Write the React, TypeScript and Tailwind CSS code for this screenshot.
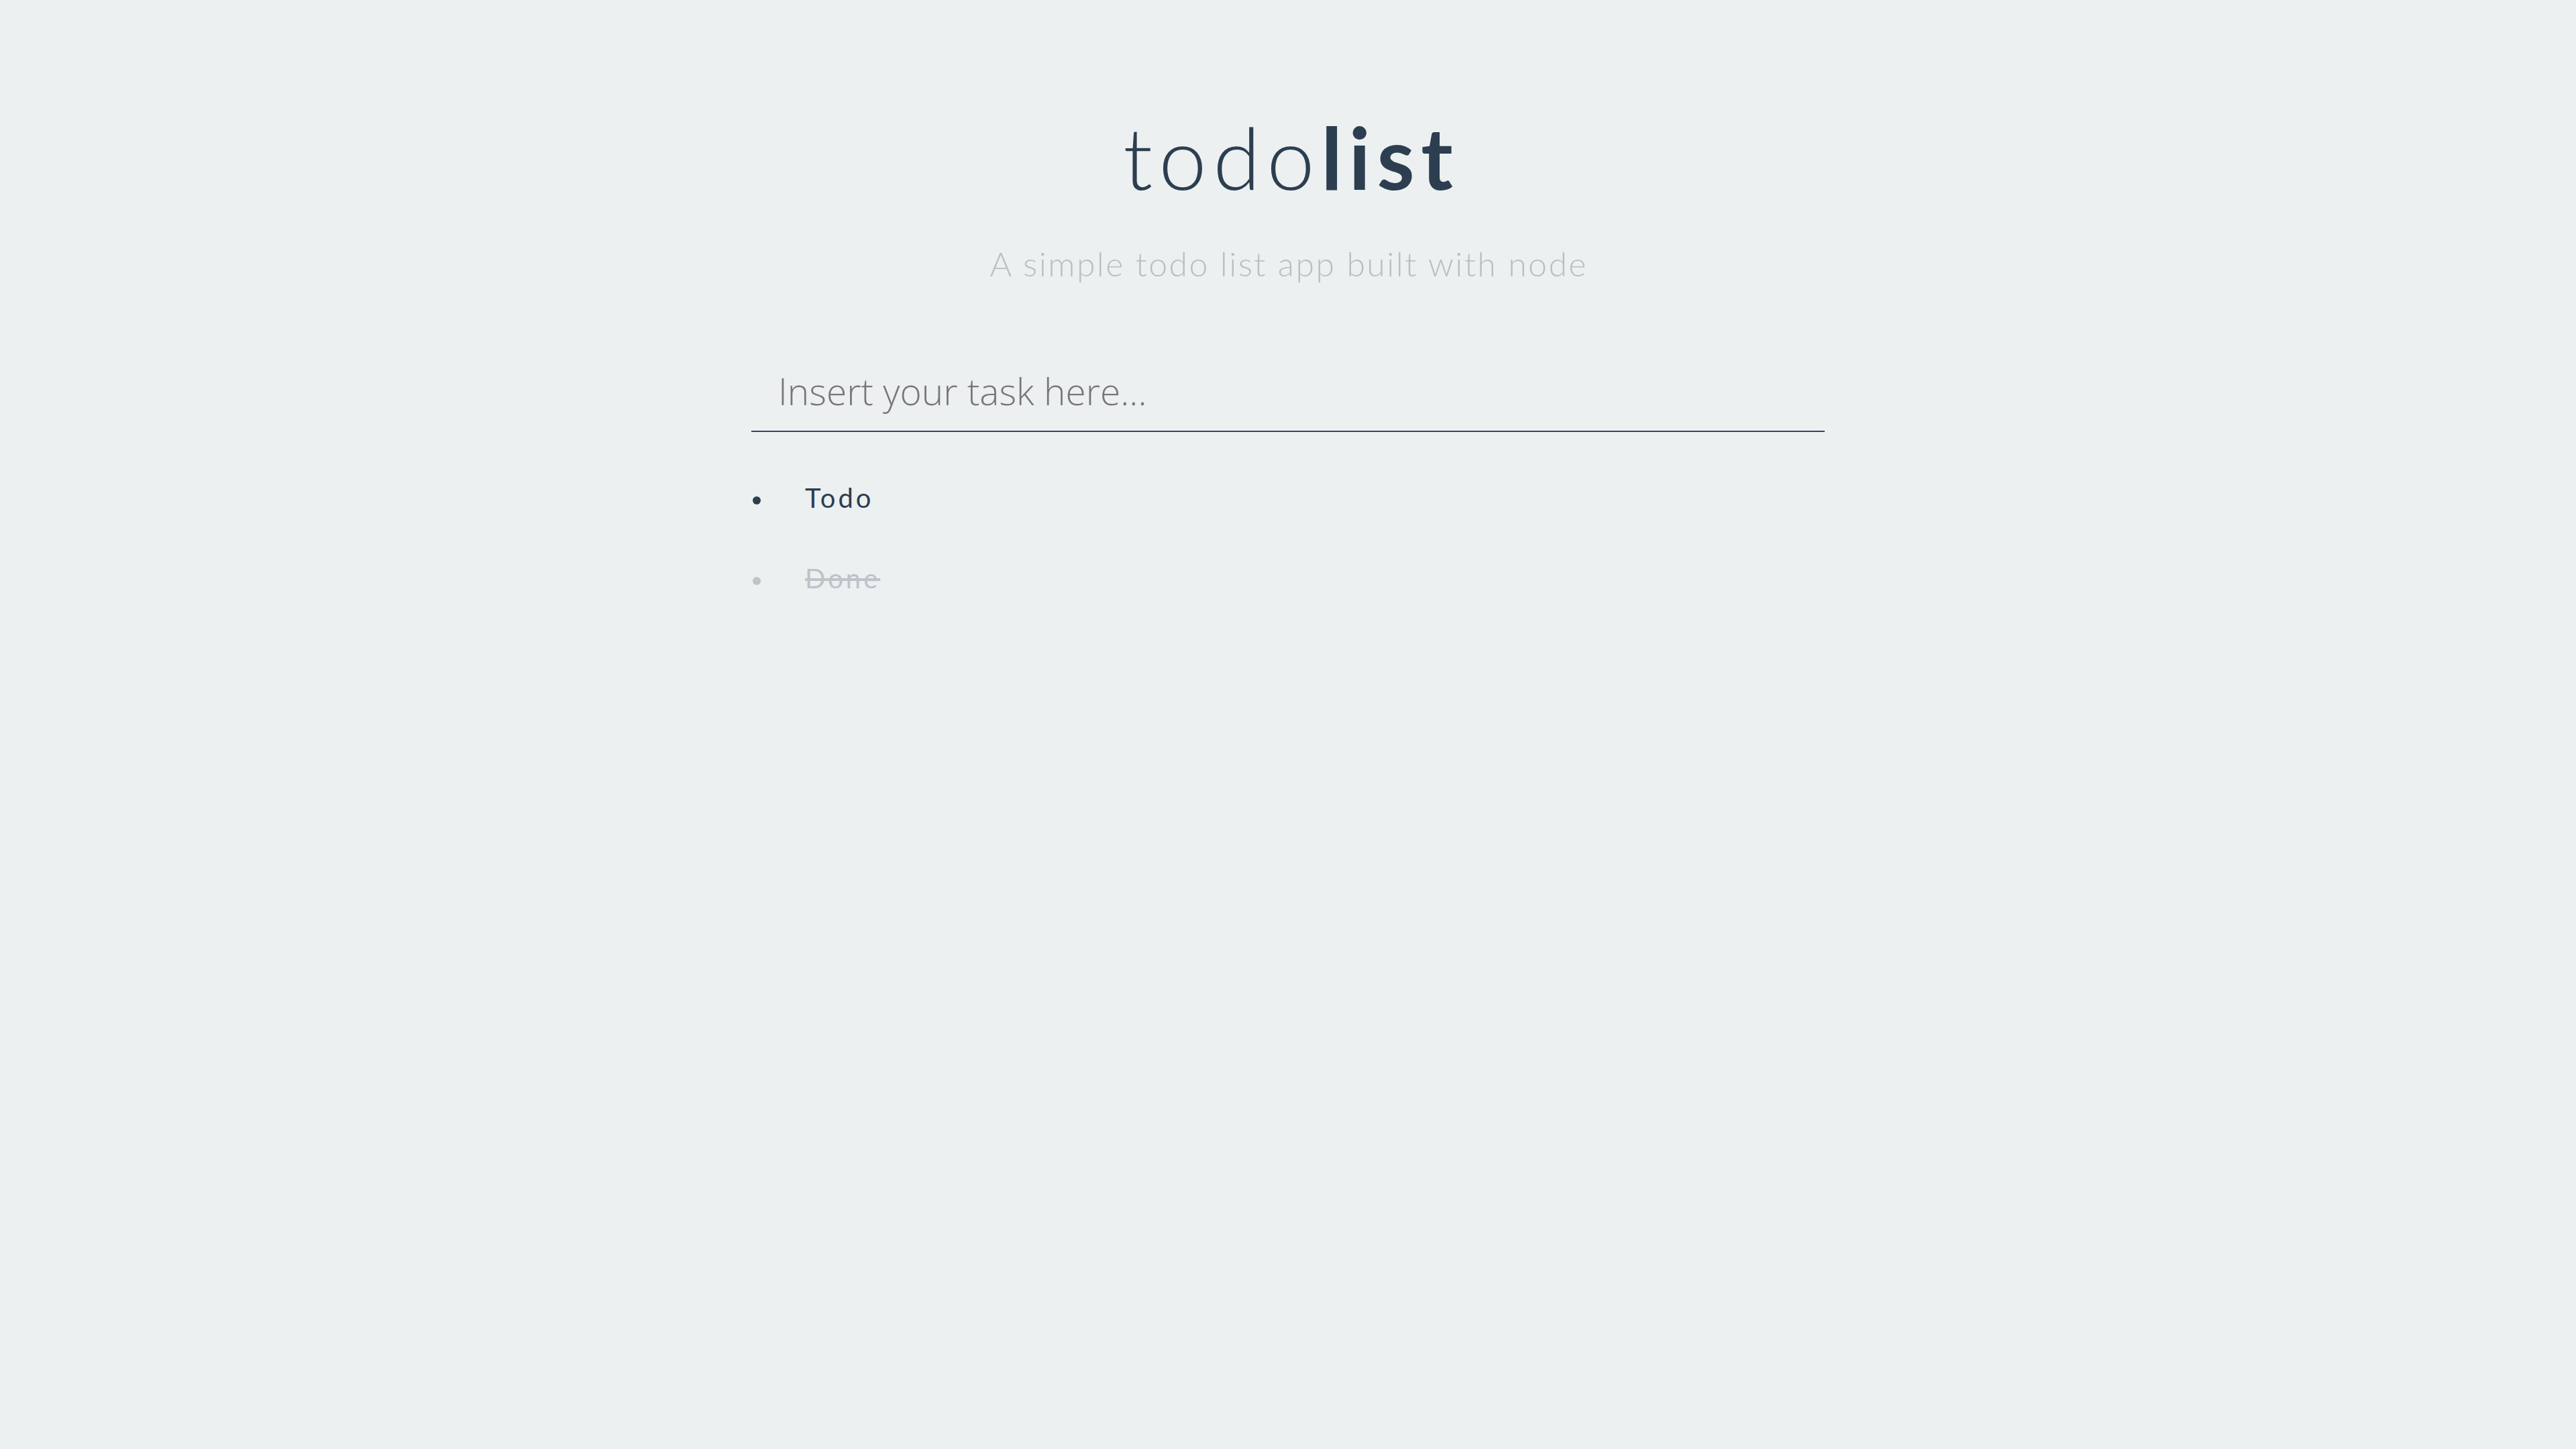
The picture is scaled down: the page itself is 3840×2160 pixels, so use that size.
import React from "react";

export default function App() {
  return (
    <div className="min-h-screen bg-[#ecf0f1] font-['Lato',sans-serif]">
      <div className="w-[1600px] mx-auto pt-[170px]">
        <h1 className="text-center text-[128px] leading-[128px] tracking-[9.5px] pl-[9.5px] text-[#2c3e50] font-['Lato',sans-serif]">
          <span className="font-light">todo</span>
          <span className="font-bold">list</span>
        </h1>
        <p className="mt-[65px] text-center text-[50px] leading-[60px] tracking-[2.4px] pl-[2.4px] font-light text-[#b8bfc4]">
          A simple todo list app built with node
        </p>
        <input
          type="text"
          placeholder="Insert your task here..."
          className="mt-[119px] block w-full h-[102px] pt-0 pb-[20px] pl-[40px] bg-transparent border-0 border-b-2 border-[#34495e] outline-none text-[55px] font-['Open_Sans',sans-serif] font-light text-[#2c3e50] placeholder:text-[#777777]"
        />
        <ul className="mt-[38px]">
          <li className="flex items-center leading-[120px] text-[40px] tracking-[4px] text-[#2c3e50]">
            <span className="ml-[2px] mt-[7px] w-[12px] h-[12px] rounded-full bg-[#2c3e50] shrink-0" />
            <span className="ml-[66px]">Todo</span>
          </li>
          <li className="flex items-center leading-[120px] text-[40px] tracking-[4px] text-[#bdc3c7]">
            <span className="ml-[2px] mt-[7px] w-[12px] h-[12px] rounded-full bg-[#bdc3c7] shrink-0" />
            <span className="ml-[66px] line-through">Done</span>
          </li>
        </ul>
      </div>
    </div>
  );
}
